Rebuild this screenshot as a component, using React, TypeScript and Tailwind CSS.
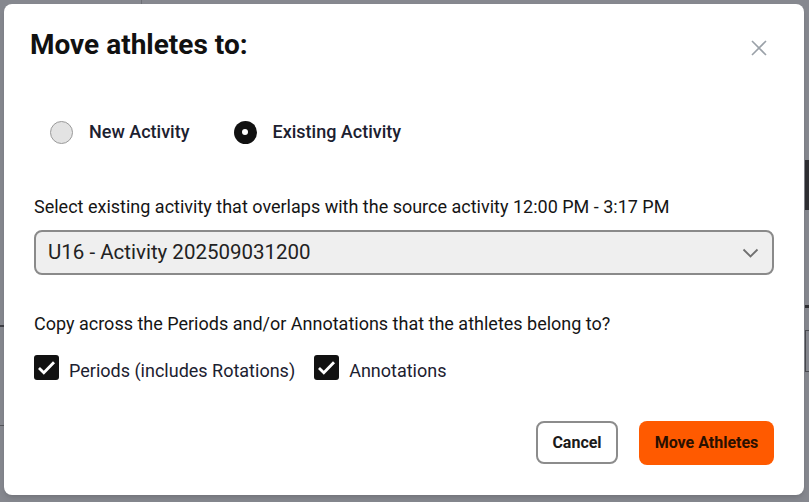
import { useState } from "react";

const font = { fontFamily: "Roboto, 'Liberation Sans', sans-serif" };

function Radio({ checked, label, onClick }: { checked: boolean; label: string; onClick: () => void }) {
  return (
    <button onClick={onClick} className="flex items-center h-6 text-[18px] leading-6 font-medium text-[#1c2130]">
      {checked ? (
        <span className="w-[23px] h-[23px] rounded-full bg-[#111] flex items-center justify-center">
          <span className="w-[6px] h-[6px] rounded-full bg-white" />
        </span>
      ) : (
        <span className="w-[23px] h-[23px] rounded-full bg-[#e3e3e3] border border-[#9a9a9a]" />
      )}
      <span className="ml-[16px]">{label}</span>
    </button>
  );
}

function Check({ label }: { label: string }) {
  return (
    <label className="flex items-start text-[18px] leading-6 text-[#1c2130]">
      <span className="w-[25px] h-[25px] rounded-[3px] bg-[#111] flex items-center justify-center">
        <svg width="19" height="15" viewBox="0 0 19 15" fill="none">
          <path d="M2 8 L6.8 12.8 L17 2.2" stroke="white" strokeWidth="2.8" />
        </svg>
      </span>
      <span className="ml-[10px] mt-[4px]">{label}</span>
    </label>
  );
}

export default function App() {
  const [mode, setMode] = useState<"new" | "existing">("existing");

  return (
    <div className="relative w-[809px] h-[502px] overflow-hidden bg-[#86888f]" style={font}>
      {/* page behind the overlay */}
      <span className="absolute left-[141px] top-0 w-px h-[4px] bg-[#6e7076]" />
      <span className="absolute left-0 top-[325px] w-[4px] h-[2px] bg-[#3f4046]" />
      <span className="absolute left-0 top-[425px] w-[4px] h-px bg-[#55575c]" />
      <span className="absolute right-0 top-[160px] w-[4px] h-[50px] bg-[#2f3034]" />
      <span className="absolute right-0 top-[305px] w-[4px] h-[3px] bg-[#2f3034]" />
      <span className="absolute right-0 top-[330px] w-[4px] h-[42px] border-l border-y border-[#4a4b50]" />

      <div className="absolute left-[4px] top-[4px] w-[800px] h-[491px] bg-white rounded-[8px] shadow-md">
        <div className="relative pt-[25px] pl-[26px]">
          <h2 className="text-[28px] leading-8 font-bold text-[#111]">Move athletes to:</h2>
          <button className="absolute right-[37px] top-[36px] text-[#9aa1a8]">
            <svg width="16" height="16" viewBox="0 0 16 16" fill="none">
              <path d="M1 1 L15 15 M15 1 L1 15" stroke="currentColor" strokeWidth="1.6" />
            </svg>
          </button>
        </div>

        <div className="px-[30px]">
          <div className="flex gap-[44px] pl-[16px] mt-[59px]">
            <Radio checked={mode === "new"} label="New Activity" onClick={() => setMode("new")} />
            <Radio checked={mode === "existing"} label="Existing Activity" onClick={() => setMode("existing")} />
          </div>

          <p className="mt-[51px] text-[18px] leading-6 text-[#151515]">
            Select existing activity that overlaps with the source activity 12:00 PM - 3:17 PM
          </p>

          <div className="mt-[11px] h-[45px] rounded-[8px] border-2 border-[#8a8a8a] bg-[#efefef] flex items-center justify-between pl-[12px] pr-[13px]">
            <span className="text-[20.5px] text-[#222]">U16 - Activity 202509031200</span>
            <svg width="17" height="10" viewBox="0 0 17 10" fill="none">
              <path d="M1.5 1.5 L8.5 8.5 L15.5 1.5" stroke="#707070" strokeWidth="1.8" />
            </svg>
          </div>

          <p className="mt-[37px] text-[18px] leading-6 text-[#151515]">
            Copy across the Periods and/or Annotations that the athletes belong to?
          </p>

          <div className="mt-[19px] flex gap-[19px]">
            <Check label="Periods (includes Rotations)" />
            <Check label="Annotations" />
          </div>

          <div className="mt-[38px] flex justify-end gap-[21px]">
            <button className="w-[82px] h-[43px] rounded-[8px] border-2 border-[#8c8c8c] text-[16px] font-bold text-[#1a1a1a]">
              Cancel
            </button>
            <button className="w-[135px] h-[44px] rounded-[8px] bg-[#ff5a00] text-[16px] font-bold text-[#2a1000]">
              Move Athletes
            </button>
          </div>
        </div>
      </div>
    </div>
  );
}
